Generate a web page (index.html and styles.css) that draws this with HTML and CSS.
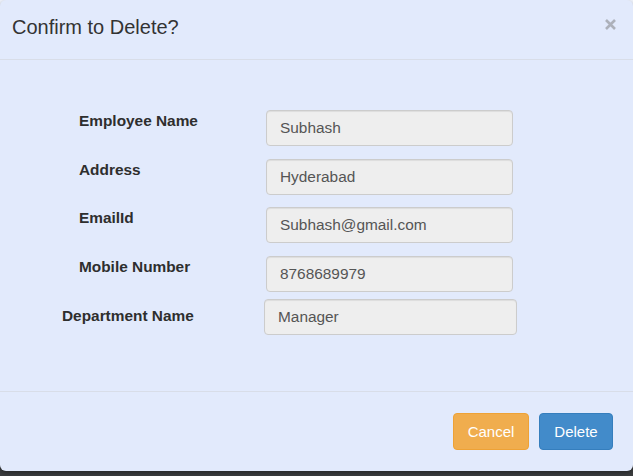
FILE: index.html
```html
<!DOCTYPE html>
<html>
<head>
<meta charset="utf-8">
<link rel="stylesheet" href="styles.css">
</head>
<body>
<div class="modal">
  <div class="modal-header">
    <h4 class="modal-title">Confirm to Delete?</h4>
    <button class="close" type="button" aria-label="Close">
      <svg width="11" height="11" viewBox="0 0 11 11"><path d="M1 1 L10 10 M10 1 L1 10" stroke="currentColor" stroke-width="2.6" stroke-linecap="butt"/></svg>
    </button>
  </div>
  <div class="modal-body">
    <div class="row">
      <label class="lbl">Employee Name</label>
      <input class="field" type="text" value="Subhash" readonly>
    </div>
    <div class="row">
      <label class="lbl">Address</label>
      <input class="field" type="text" value="Hyderabad" readonly>
    </div>
    <div class="row">
      <label class="lbl">EmailId</label>
      <input class="field" type="text" value="Subhash@gmail.com" readonly>
    </div>
    <div class="row">
      <label class="lbl">Mobile Number</label>
      <input class="field" type="text" value="8768689979" readonly>
    </div>
    <div class="row row-wide">
      <label class="lbl">Department Name</label>
      <input class="field" type="text" value="Manager" readonly>
    </div>
  </div>
  <div class="modal-footer">
    <button class="btn btn-warning" type="button">Cancel</button>
    <button class="btn btn-primary" type="button">Delete</button>
  </div>
</div>
</body>
</html>
```

FILE: styles.css
```css
* { box-sizing: border-box; }
html, body {
  margin: 0;
  padding: 0;
  height: 476px;
  overflow: hidden;
}
body {
  font-family: "Liberation Sans", Arial, sans-serif;
  color: #333;
  background: linear-gradient(#eef2fb 0, #eef2fb 440px, #3b3d3f 440px);
}
.modal {
  width: 633px;
  height: 471px;
  background: #e2eafc;
  border-radius: 6px;
  box-shadow: 0 2px 4px rgba(0,0,0,.35);
  display: flex;
  flex-direction: column;
}
.modal-header {
  height: 60px;
  padding: 13px 12px 0 12px;
  border-bottom: 1px solid #d8dde8;
  display: flex;
  align-items: flex-start;
  justify-content: space-between;
}
.modal-title {
  margin: 0;
  font-size: 20px;
  font-weight: normal;
  line-height: 28.5px;
  color: #333;
}
.close {
  border: 0;
  background: none;
  padding: 0;
  margin: 6px 5px 0 0;
  color: #adb1ba;
  width: 11px;
  height: 11px;
  display: block;
}
.close svg { display: block; }
.modal-body {
  flex: 1;
  padding-top: 50px;
  display: flex;
  flex-direction: column;
  gap: 12.5px;
}
.row {
  display: grid;
  grid-template-columns: 187px 247px;
  margin-left: 79px;
  align-items: start;
}
.row-wide {
  grid-template-columns: 202px 253px;
  margin-left: 62px;
  margin-top: -5px;
}
.lbl {
  font-size: 15.4px;
  font-weight: bold;
  line-height: 21.4px;
  color: #2e2e2e;
}
.row-wide .lbl { padding-top: 6px; }
.field {
  height: 36px;
  width: 100%;
  padding: 0 12px 0 13px;
  font-family: "Liberation Sans", Arial, sans-serif;
  font-size: 15.4px;
  color: #555;
  background: #eeeeee;
  border: 1px solid #cccccc;
  border-radius: 4px;
  box-shadow: inset 0 1px 1px rgba(0,0,0,.075);
  outline: none;
}
.modal-footer {
  border-top: 1px solid #d8dde8;
  padding: 21px 20px 21px 20px;
  display: flex;
  justify-content: flex-end;
  gap: 10px;
}
.btn {
  font-family: "Liberation Sans", Arial, sans-serif;
  font-size: 15px;
  line-height: 19px;
  height: 37px;
  padding: 8px 0;
  text-align: center;
  border: 1px solid transparent;
  border-radius: 4px;
  color: #fff;
}
.btn-warning {
  width: 76px;
  background: #f0ad4e;
  border-color: #eea236;
}
.btn-primary {
  width: 74px;
  background: #428bca;
  border-color: #357ebd;
}
```
